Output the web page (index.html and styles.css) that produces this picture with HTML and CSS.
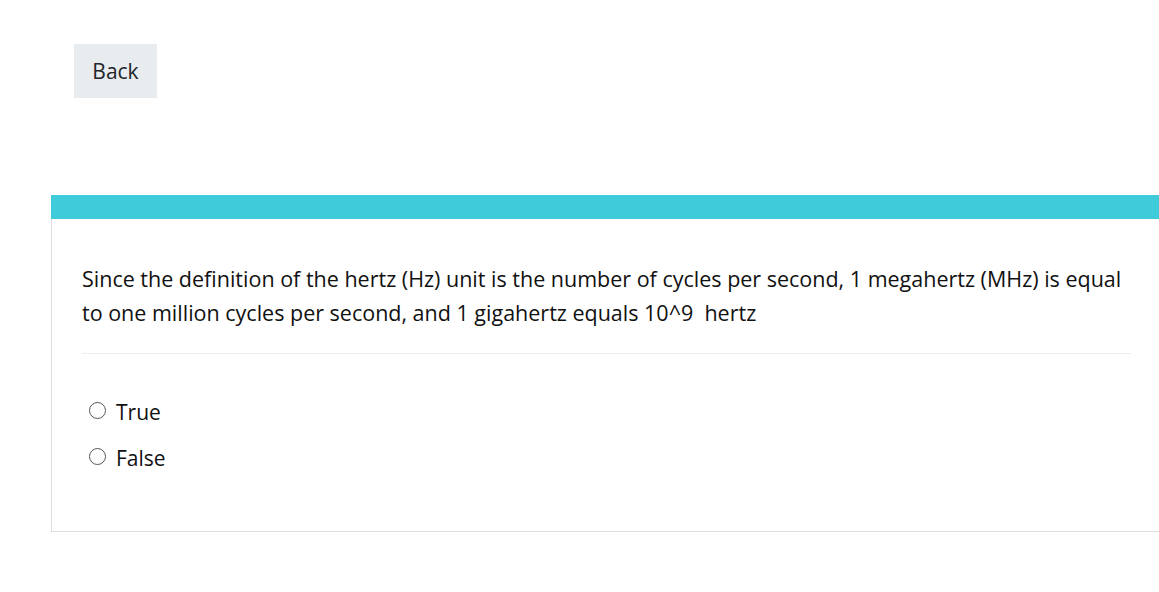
FILE: index.html
```html
<!DOCTYPE html>
<html>
<head>
<meta charset="utf-8">
<link rel="stylesheet" href="styles.css">
</head>
<body>
<div class="page">
  <div class="top">
    <button class="back">Back</button>
  </div>
  <div class="card">
    <div class="card-bar"></div>
    <div class="card-body">
      <p class="question">Since the definition of the hertz (Hz) unit is the number of cycles per second, 1 megahertz (MHz) is equal to one million cycles per second, and 1 gigahertz equals 10^9&nbsp; hertz</p>
      <hr class="divider">
      <div class="options">
        <label class="option"><span class="radio"></span><span>True</span></label>
        <label class="option"><span class="radio"></span><span>False</span></label>
      </div>
    </div>
  </div>
</div>
</body>
</html>
```
FILE: styles.css
```css
html, body {
  margin: 0;
  padding: 0;
  background: #fff;
}
body {
  font-family: "Open Sans", "Noto Sans", sans-serif;
  color: #212529;
  width: 1159px;
  overflow: hidden;
}
.page {
  padding-left: 51px;
}
.top {
  padding: 44px 0 0 23px;
  height: 195px;
  box-sizing: border-box;
}
.back {
  background: #e9ecef;
  border: none;
  width: 83px;
  height: 54px;
  font-family: inherit;
  font-size: 21px;
  color: #212529;
  padding: 0;
}
.card {
  width: 1111px;
  border: 1px solid #dedede;
  border-top: none;
  box-sizing: border-box;
}
.card-bar {
  height: 24px;
  background: #40cbdb;
  margin: 0 -1px;
}
.card-body {
  padding: 43px 30px 56px 30px;
}
.question {
  margin: 0;
  font-size: 21.5px;
  line-height: 34px;
  color: #111;
}
.divider {
  border: none;
  border-top: 1px solid #ececec;
  margin: 23px 0 0 0;
}
.options {
  padding: 41px 0 0 7px;
  display: flex;
  flex-direction: column;
  gap: 12px;
}
.option {
  display: flex;
  align-items: center;
  gap: 10px;
  font-size: 21px;
  line-height: 34px;
  color: #111;
}
.radio {
  width: 17px;
  height: 17px;
  border: 1px solid #555;
  border-radius: 50%;
  box-sizing: border-box;
  margin-top: -3px;
}
```
